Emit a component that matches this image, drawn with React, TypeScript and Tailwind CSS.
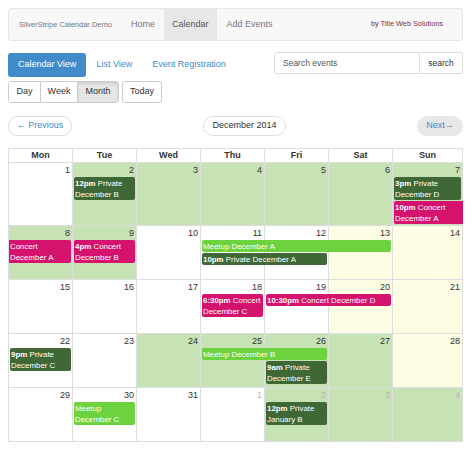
import React from "react";

type Ev = {
  col: number;
  row: number;
  span?: number;
  rows?: number;
  time?: string;
  title: string;
  color: "dark" | "mag" | "lime";
  contLeft?: boolean;
  contRight?: boolean;
};

type Week = {
  days: number[];
  bg: string[];
  other?: boolean[];
  events: Ev[];
};

const colStart: Record<number, string> = {
  1: "col-start-1",
  2: "col-start-2",
  3: "col-start-3",
  4: "col-start-4",
  5: "col-start-5",
  6: "col-start-6",
  7: "col-start-7",
};
const colSpan: Record<number, string> = {
  1: "col-span-1",
  2: "col-span-2",
  3: "col-span-3",
};
const rowStart: Record<number, string> = {
  2: "row-start-2",
  3: "row-start-3",
};
const rowSpan: Record<number, string> = {
  1: "row-span-1",
  2: "row-span-2",
};
const bgMap: Record<string, string> = {
  w: "bg-white",
  g: "bg-[#c7e3b6]",
  y: "bg-[#fdfde4]",
};
const colorMap: Record<string, string> = {
  dark: "bg-[#3f6836]",
  mag: "bg-[#d5126e]",
  lime: "bg-[#6cd33f]",
};

const weeks: Week[] = [
  {
    days: [1, 2, 3, 4, 5, 6, 7],
    bg: ["w", "g", "g", "g", "g", "g", "g"],
    events: [
      { col: 2, row: 2, rows: 2, time: "12pm", title: "Private December B", color: "dark" },
      { col: 7, row: 2, time: "3pm", title: "Private December D", color: "dark" },
      { col: 7, row: 3, time: "10pm", title: "Concert December A", color: "mag", contRight: true },
    ],
  },
  {
    days: [8, 9, 10, 11, 12, 13, 14],
    bg: ["g", "g", "w", "w", "w", "y", "y"],
    events: [
      { col: 1, row: 2, rows: 2, title: "Concert December A", color: "mag", contLeft: true },
      { col: 2, row: 2, rows: 2, time: "4pm", title: "Concert December B", color: "mag" },
      { col: 4, row: 2, span: 3, title: "Meetup December A", color: "lime" },
      { col: 4, row: 3, span: 2, time: "10pm", title: "Private December A", color: "dark" },
    ],
  },
  {
    days: [15, 16, 17, 18, 19, 20, 21],
    bg: ["w", "w", "w", "w", "w", "y", "y"],
    events: [
      { col: 4, row: 2, time: "6:30pm", title: "Concert December C", color: "mag" },
      { col: 5, row: 2, span: 2, time: "10:30pm", title: "Concert December D", color: "mag" },
    ],
  },
  {
    days: [22, 23, 24, 25, 26, 27, 28],
    bg: ["w", "w", "g", "g", "g", "g", "y"],
    events: [
      { col: 1, row: 2, rows: 2, time: "9pm", title: "Private December C", color: "dark" },
      { col: 4, row: 2, span: 2, title: "Meetup December B", color: "lime" },
      { col: 5, row: 3, time: "9am", title: "Private December E", color: "dark" },
    ],
  },
  {
    days: [29, 30, 31, 1, 2, 3, 4],
    bg: ["w", "w", "w", "w", "g", "g", "g"],
    other: [false, false, false, true, true, true, true],
    events: [
      { col: 2, row: 2, title: "Meetup December C", color: "lime" },
      { col: 5, row: 2, time: "12pm", title: "Private January B", color: "dark" },
    ],
  },
];

const GRID = "grid grid-cols-[64px_64px_64px_64px_64px_64px_1fr]";

function EventChip({ ev }: { ev: Ev }) {
  const margin = ev.contLeft
    ? "ml-0 mr-[2px] rounded-r-[2px]"
    : ev.contRight
    ? "ml-px mr-0 rounded-l-[2px]"
    : "ml-px mr-[2px] rounded-[2px]";
  return (
    <div
      className={`${colStart[ev.col]} ${colSpan[ev.span ?? 1]} ${rowStart[ev.row]} ${rowSpan[ev.rows ?? 1]} self-start mb-px pt-px px-px text-[7.9px] leading-[11px] text-white ${colorMap[ev.color]} ${margin}`}
    >
      {ev.time && <span className="font-bold">{ev.time} </span>}
      {ev.title}
    </div>
  );
}

function WeekRow({ week }: { week: Week }) {
  return (
    <div className={`${GRID} grid-rows-[14px_auto_auto_minmax(1px,1fr)] min-h-[54px]`}>
      {week.bg.map((b, i) => (
        <div
          key={"bg" + i}
          className={`${colStart[i + 1]} row-span-full border-r border-b border-[#dddddd] ${bgMap[b]}`}
        />
      ))}
      {week.days.map((d, i) => (
        <div
          key={"d" + i}
          className={`${colStart[i + 1]} row-start-1 text-right pr-[3px] pt-px text-[9px] leading-[13px] ${
            week.other && week.other[i] ? "text-[#b5b5b5]" : "text-[#333333]"
          }`}
        >
          {d}
        </div>
      ))}
      {week.events.map((ev, i) => (
        <EventChip key={"e" + i} ev={ev} />
      ))}
    </div>
  );
}

export default function App() {
  const heads = ["Mon", "Tue", "Wed", "Thu", "Fri", "Sat", "Sun"];
  return (
    <div className="min-h-[464px] bg-white pt-2 pl-2 font-['Liberation_Sans',Arial,Helvetica,sans-serif] text-[#333333]">
      <div className="w-[455px]">
        {/* Navbar */}
        <div className="flex h-[33px] items-stretch rounded-[3px] border border-[#e7e7e7] bg-[#f8f8f8]">
          <div className="flex items-center pl-[10px] pr-[10px] text-[7.5px] text-[#777777]">
            SilverStripe Calendar Demo
          </div>
          <div className="flex items-center px-[9px] text-[9px] text-[#777777]">Home</div>
          <div className="flex items-center bg-[#e7e7e7] px-[8px] text-[9px] text-[#555555]">Calendar</div>
          <div className="flex items-center px-[10px] text-[9px] text-[#777777]">Add Events</div>
          <div className="ml-auto mr-[19px] flex items-center text-[7.3px] text-[#7b2d44]">
            by Title Web Solutions
          </div>
        </div>

        {/* Row 2 */}
        <div className="mt-[12px] flex items-start">
          <div className="flex h-[24px] items-center rounded-[3px] bg-[#428bca] px-[10px] text-[9px] text-white">
            Calendar View
          </div>
          <div className="flex h-[24px] items-center px-[10px] text-[9px] text-[#428bca]">List View</div>
          <div className="flex h-[24px] items-center px-[10px] text-[9px] text-[#428bca]">Event Registration</div>
          <div className="ml-auto -mt-px flex h-[22px]">
            <div className="flex w-[146px] items-center rounded-l-[3px] border border-[#dddddd] bg-white pl-[8px] text-[8.5px] text-[#555555]">
              Search events
            </div>
            <div className="flex w-[43px] items-center justify-center rounded-r-[3px] border border-l-0 border-[#dddddd] bg-white text-[8.5px] text-[#333333]">
              search
            </div>
          </div>
        </div>

        {/* Row 3 */}
        <div className="mt-[4px] flex h-[22px] items-stretch">
          <div className="flex rounded-[3px] border border-[#cccccc] text-[9px]">
            <div className="flex w-[31px] items-center justify-center bg-white">Day</div>
            <div className="flex w-[37px] items-center justify-center border-l border-[#cccccc] bg-white">Week</div>
            <div className="flex w-[41px] items-center justify-center border-l border-[#cccccc] bg-[#e6e6e6] shadow-[inset_0_2px_3px_rgba(0,0,0,0.1)]">
              Month
            </div>
          </div>
          <div className="ml-[3px] flex w-[40px] items-center justify-center rounded-[3px] border border-[#cccccc] bg-white text-[9px]">
            Today
          </div>
        </div>

        {/* Row 4 */}
        <div className="mt-[13px] flex h-[20px] items-stretch justify-between">
          <div className="flex w-[64px] items-center justify-center rounded-full border border-[#dddddd] bg-white text-[9px] text-[#428bca]">
            ← Previous
          </div>
          <div className="flex w-[83px] items-center justify-center rounded-full border border-[#dddddd] bg-white text-[9px] text-[#333333]">
            December 2014
          </div>
          <div className="flex w-[46px] items-center justify-center rounded-full bg-[#e8e8e8] text-[9px] text-[#428bca]">
            Next→
          </div>
        </div>

        {/* Calendar */}
        <div className="mt-[12px] border-l border-t border-[#dddddd]">
          <div className={GRID}>
            {heads.map((h) => (
              <div
                key={h}
                className="h-[14px] border-r border-b border-[#dddddd] bg-white text-center text-[9px] font-bold leading-[13px]"
              >
                {h}
              </div>
            ))}
          </div>
          {weeks.map((w, i) => (
            <WeekRow key={i} week={w} />
          ))}
        </div>
      </div>
    </div>
  );
}
